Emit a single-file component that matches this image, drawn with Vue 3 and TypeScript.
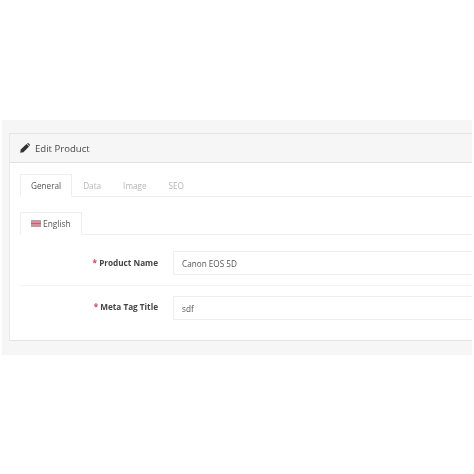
<script setup lang="ts">
const tabs = ['General', 'Data', 'Image', 'SEO']
const fields = [
  { label: 'Product Name', value: 'Canon EOS 5D' },
  { label: 'Meta Tag Title', value: 'sdf' },
]
</script>

<template>
  <div class="page">
    <div class="band">
      <section class="panel">
        <header class="panel-heading">
          <svg class="pencil" width="10" height="10" viewBox="0 0 13 13">
            <path d="M0.3 12.7 L1 8.6 L8.4 1.2 L11.8 4.6 L4.4 12 Z" fill="#333" />
            <path d="M9.2 0.6 L9.8 0.2 Q10.5 -0.1 11.1 0.3 L12.7 1.9 Q13.1 2.5 12.7 3.2 L12.3 3.8 Z" fill="#333" />
          </svg>
          <span>Edit Product</span>
        </header>
        <div class="panel-body">
          <nav class="tabs">
            <span v-for="(tab, i) in tabs" :key="tab" class="tab" :class="{ active: i === 0 }">{{ tab }}</span>
          </nav>
          <nav class="tabs lang">
            <span class="tab active">
              <svg class="flag" width="10" height="7" viewBox="0 0 10 7">
                <rect width="10" height="7" fill="#a9a4b4" />
                <rect x="2" y="1.5" width="8" height="5.5" fill="#dc8f9a" />
                <rect y="3" width="10" height="1" fill="#d45a6a" />
              </svg>
              English
            </span>
          </nav>
          <div v-for="field in fields" :key="field.label" class="row">
            <label class="label"><span class="req">*</span> {{ field.label }}</label>
            <div class="input">{{ field.value }}</div>
          </div>
        </div>
      </section>
    </div>
  </div>
</template>

<style scoped>
.page {
  width: 474px;
  height: 474px;
  padding-top: 120px;
  box-sizing: border-box;
  overflow: hidden;
  background: #fff;
  font-family: "Open Sans", "Liberation Sans", sans-serif;
  font-size: 8.2px;
  color: #555;
  filter: blur(0.3px);
}
.band {
  margin: 0 2px;
  height: 235px;
  padding: 13px 0 0 7px;
  box-sizing: border-box;
  background: #f6f6f6;
}
.panel {
  height: 208px;
  box-sizing: border-box;
  background: #fff;
  border: 1px solid #e4e4e4;
  border-right: 0;
  border-left-color: #e8e8e8;
}
.panel-heading {
  display: flex;
  align-items: center;
  gap: 5px;
  height: 29px;
  padding-left: 10px;
  box-sizing: border-box;
  background: #f6f6f6;
  border-bottom: 1px solid #dfdfdf;
  font-size: 9.6px;
  color: #4a4a4a;
}
.panel-body {
  padding: 11px 0 0 10px;
}
.tabs {
  display: flex;
  height: 23px;
  box-sizing: border-box;
  border-bottom: 1px solid #eeeeee;
}
.tab {
  display: flex;
  align-items: center;
  gap: 2px;
  padding: 0 10px;
  box-sizing: border-box;
  height: 23px;
  border: 1px solid transparent;
  color: #b5b5b5;
}
.tab.active {
  background: #fff;
  border-color: #eeeeee;
  border-bottom-color: #fff;
  color: #555;
}
.lang {
  margin-top: 15px;
  margin-bottom: 16px;
}
.lang .tab {
  font-size: 8.4px;
}
.flag {
  display: block;
}
.row {
  display: flex;
  align-items: center;
  height: 35px;
  box-sizing: border-box;
  padding-bottom: 10px;
  margin-bottom: 9px;
  border-bottom: 1px solid #f3f3f3;
}
.row:last-child {
  border-bottom: 0;
}
.label {
  width: 138px;
  margin-bottom: 2px;
  text-align: right;
  font-weight: 700;
  color: #444;
}
.req {
  color: #c9485b;
}
.input {
  flex: 1;
  height: 24px;
  margin-left: 15px;
  padding-left: 8px;
  line-height: 24px;
  box-sizing: border-box;
  border: 1px solid #eeeeee;
  border-right: 0;
  color: #555;
}
</style>
